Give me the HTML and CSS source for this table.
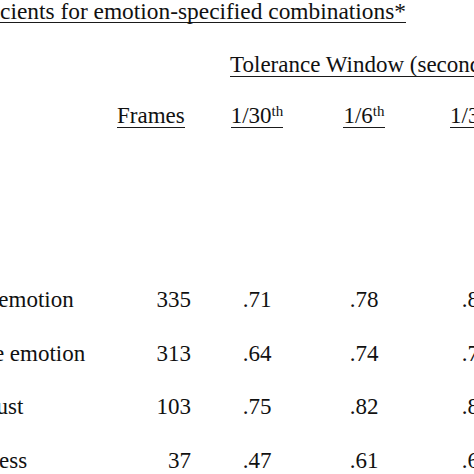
FILE: index.html
```html
<!DOCTYPE html>
<html lang="en">
<head>
<meta charset="utf-8">
<title>Kappa coefficients</title>
<link rel="stylesheet" href="styles.css">
</head>
<body>
<div class="page">
  <div class="title"><span class="ul">Kappa coefficients for emotion-specified combinations*</span></div>
  <div class="table">
    <div class="grid head1">
      <div class="tw"><span class="ul">Tolerance Window (seconds)</span></div>
    </div>
    <div class="grid head2">
      <div class="label"></div>
      <div class="frames frames-h"><span class="ul">Frames</span></div>
      <div class="col c1"><span class="ul">1/30<sup>th</sup></span></div>
      <div class="col c2"><span class="ul">1/6<sup>th</sup></span></div>
      <div class="col c3"><span class="ul">1/3<sup>rd</sup></span></div>
    </div>
    <div class="body">
      <div class="grid row">
        <div class="label">Any emotion</div>
        <div class="frames">335</div>
        <div class="col c1">.71</div>
        <div class="col c2">.78</div>
        <div class="col c3 val">.84</div>
      </div>
      <div class="grid row">
        <div class="label">Same emotion</div>
        <div class="frames">313</div>
        <div class="col c1">.64</div>
        <div class="col c2">.74</div>
        <div class="col c3 val">.79</div>
      </div>
      <div class="grid row">
        <div class="label">Disgust</div>
        <div class="frames">103</div>
        <div class="col c1">.75</div>
        <div class="col c2">.82</div>
        <div class="col c3 val">.86</div>
      </div>
      <div class="grid row">
        <div class="label">Sadness</div>
        <div class="frames">37</div>
        <div class="col c1">.47</div>
        <div class="col c2">.61</div>
        <div class="col c3 val">.66</div>
      </div>
    </div>
  </div>
</div>
</body>
</html>
```
FILE: styles.css
```css
html, body {
  margin: 0;
  padding: 0;
  background: #ffffff;
}

.page {
  width: 474px;
  height: 474px;
  overflow: hidden;
  font-family: "Liberation Serif", "Times New Roman", serif;
  font-size: 23px;
  line-height: 24px;
  color: #111111;
  white-space: nowrap;
}

.ul {
  display: inline-block;
  line-height: 22px;
  border-bottom: 1.5px solid #1a1a1a;
}

.ul sup {
  font-size: 15px;
  line-height: 0;
  vertical-align: 7px;
}

.title {
  display: flex;
  justify-content: flex-end;
  width: 406px;
  font-size: 23.4px;
}

.table {
  margin-left: -47px;
}

.grid {
  display: grid;
  grid-template-columns: 164px 74px 132px 82px 132px;
  width: max-content;
}

.head1 {
  margin-top: 30px;
}

.tw {
  grid-column: 3 / 6;
  text-align: center;
}

.head2 {
  margin-top: 27px;
}

.frames {
  text-align: right;
}

.frames-h {
  padding-right: 8px;
}

.col {
  text-align: center;
}

.body {
  margin-top: 145px;
}

.row {
  line-height: 53.5px;
}

.val.c3 {
  padding-left: 10px;
}
```
